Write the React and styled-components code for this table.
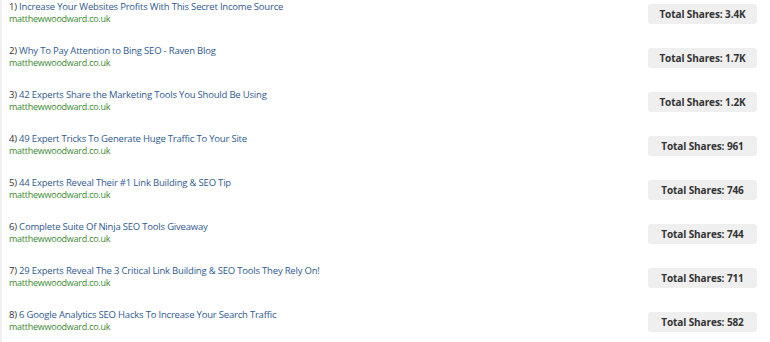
import styled, { createGlobalStyle } from "styled-components";

const GlobalStyle = createGlobalStyle`
  body {
    margin: 0;
    background: #ffffff;
    font-family: "Open Sans", "Liberation Sans", sans-serif;
  }
`;

const List = styled.ol`
  margin: 0;
  padding: 0 13px 0 7px;
  list-style: none;
  border-left: 2px solid #f1f1f1;
  min-height: 342px;
  box-sizing: border-box;
`;

const Row = styled.li`
  display: flex;
  justify-content: space-between;
  align-items: flex-start;
  height: 44px;
`;

const Info = styled.div`
  display: flex;
  flex-direction: column;
`;

const Title = styled.div`
  font-size: 9.5px;
  line-height: 13px;
  letter-spacing: -0.2px;
  color: #333333;
  white-space: nowrap;
`;

const TitleLink = styled.a`
  color: #2f5a8f;
  text-decoration: none;
`;

const Domain = styled.div`
  font-size: 9px;
  line-height: 11px;
  letter-spacing: -0.25px;
  color: #3b8a30;
`;

const Shares = styled.div`
  width: 109px;
  height: 20px;
  margin-top: 4px;
  display: flex;
  align-items: center;
  justify-content: center;
  background: #efefef;
  border-radius: 3px;
  font-size: 10px;
  font-weight: 700;
  letter-spacing: -0.1px;
  color: #333333;
`;

const posts = [
  { title: "Increase Your Websites Profits With This Secret Income Source", shares: "3.4K" },
  { title: "Why To Pay Attention to Bing SEO - Raven Blog", shares: "1.7K" },
  { title: "42 Experts Share the Marketing Tools You Should Be Using", shares: "1.2K" },
  { title: "49 Expert Tricks To Generate Huge Traffic To Your Site", shares: "961" },
  { title: "44 Experts Reveal Their #1 Link Building & SEO Tip", shares: "746" },
  { title: "Complete Suite Of Ninja SEO Tools Giveaway", shares: "744" },
  { title: "29 Experts Reveal The 3 Critical Link Building & SEO Tools They Rely On!", shares: "711" },
  { title: "6 Google Analytics SEO Hacks To Increase Your Search Traffic", shares: "582" },
];

export default function App() {
  return (
    <>
      <GlobalStyle />
      <List>
        {posts.map((post, i) => (
          <Row key={i}>
            <Info>
              <Title>
                {i + 1}) <TitleLink href="#">{post.title}</TitleLink>
              </Title>
              <Domain>matthewwoodward.co.uk</Domain>
            </Info>
            <Shares>Total Shares: {post.shares}</Shares>
          </Row>
        ))}
      </List>
    </>
  );
}
